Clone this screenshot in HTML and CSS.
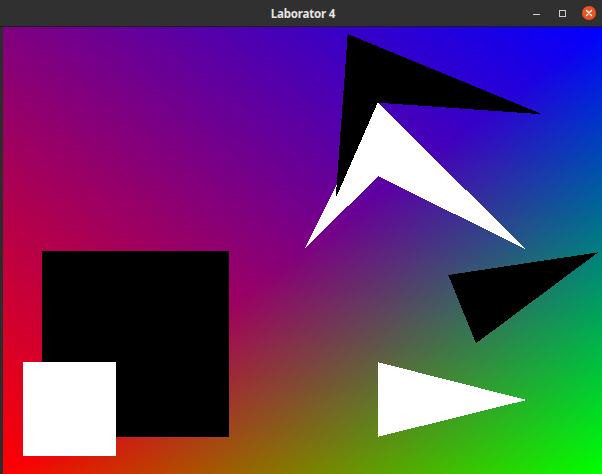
FILE: index.html
```html
<!DOCTYPE html>
<html lang="ro">
<head>
<meta charset="utf-8">
<title>Laborator 4</title>
<link rel="stylesheet" href="styles.css">
</head>
<body>
<div class="window">
  <header class="titlebar">
    <span class="spacer"></span>
    <span class="title">Laborator 4</span>
    <div class="controls">
      <span class="btn-min"></span>
      <span class="btn-max"></span>
      <span class="btn-close">
        <svg width="14" height="14" viewBox="0 0 14 14"><path d="M4.5 4.5 L9.5 9.5 M9.5 4.5 L4.5 9.5" stroke="#fff" stroke-width="1.3" stroke-linecap="round" fill="none"/></svg>
      </span>
    </div>
  </header>
  <div class="content">
    <div class="edge"></div>
    <div class="viewport">
      <div class="lower"></div>
      <svg class="scene" width="599" height="447" viewBox="3 27 599 447" shape-rendering="crispEdges">
        <polygon points="377.7,102.7 526.7,250 378.3,176 304.3,249.3" fill="#fff"/>
        <polygon points="347.7,34 542.3,114.3 377.7,102.7 335.7,198.3" fill="#000"/>
        <polygon points="448.3,275 598.3,252.3 476,343.3" fill="#000"/>
        <polygon points="378.3,362.3 526.7,400 378.3,436.7" fill="#fff"/>
        <rect x="41.7" y="250.7" width="187" height="186.3" fill="#000"/>
        <rect x="22.7" y="362.3" width="93.6" height="93.4" fill="#fff"/>
      </svg>
    </div>
  </div>
</div>
</body>
</html>
```
FILE: styles.css
```css
html, body {
  margin: 0;
  padding: 0;
  background: #2b2b2b;
}
.window {
  width: 602px;
  height: 474px;
  display: flex;
  flex-direction: column;
  overflow: hidden;
}
.titlebar {
  height: 26px;
  flex: none;
  background: #303030;
  border-bottom: 1px solid #1d1d1d;
  display: grid;
  grid-template-columns: 1fr auto 1fr;
  align-items: center;
  font-family: "Noto Sans", "DejaVu Sans", sans-serif;
}
.title {
  color: #e4e4e4;
  font-weight: bold;
  font-size: 11.5px;
  letter-spacing: -0.2px;
  padding-left: 4px;
}
.controls {
  justify-self: end;
  display: flex;
  align-items: center;
  padding-right: 6px;
}
.btn-min {
  width: 7px;
  height: 1px;
  background: #d6d6d6;
  margin-top: 3px;
}
.btn-max {
  width: 5px;
  height: 5px;
  border: 1px solid #cfcfcf;
  margin-left: 19px;
}
.btn-close {
  width: 14px;
  height: 14px;
  border-radius: 50%;
  background: #e95420;
  margin-left: 16px;
  display: flex;
}
.content {
  flex: 1;
  display: flex;
  min-height: 0;
}
.edge {
  width: 3px;
  flex: none;
  background: #2c2c2c;
}
.viewport {
  position: relative;
  width: 599px;
  height: 447px;
  background: linear-gradient(to top right, #ff0000, #0000ff);
  overflow: hidden;
}
.lower {
  position: absolute;
  inset: 0;
  background:
    linear-gradient(to right, #ff0000, #000000),
    linear-gradient(to bottom, #0000ff, #000000),
    linear-gradient(to bottom right, #000000 50%, #00ff00 100%);
  background-blend-mode: screen;
  clip-path: polygon(100% 0, 100% 100%, 0 100%);
}
.scene {
  position: absolute;
  left: 0;
  top: 0;
  display: block;
}
```
